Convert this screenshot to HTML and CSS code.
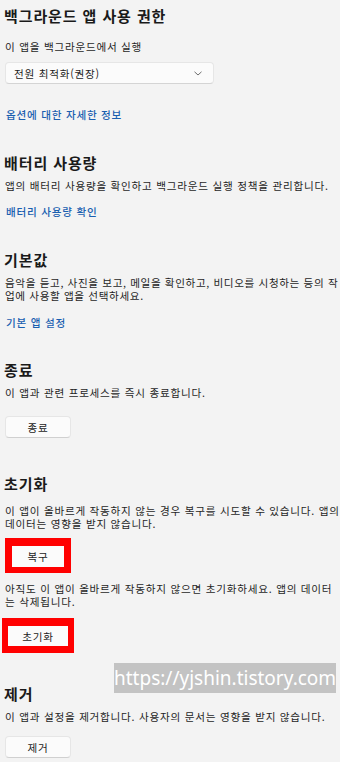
FILE: index.html
```html
<!DOCTYPE html>
<html lang="ko">
<head>
<meta charset="utf-8">
<title>앱 설정</title>
<link rel="stylesheet" href="styles.css">
</head>
<body>
<main class="page">
  <section class="group group-first">
    <h1 class="heading">백그라운드 앱 사용 권한</h1>
    <p class="label">이 앱을 백그라운드에서 실행</p>
    <div class="select">
      <span class="select-text">전원 최적화(권장)</span>
      <svg class="chevron" width="8" height="5" viewBox="0 0 8 5"><polyline points="0.5,0.8 4,4 7.5,0.8" fill="none" stroke="#5f5f5f" stroke-width="0.9"/></svg>
    </div>
    <a class="link link-first">옵션에 대한 자세한 정보</a>
  </section>

  <section class="group group-battery">
    <h2 class="heading">배터리 사용량</h2>
    <p class="desc">앱의 배터리 사용량을 확인하고 백그라운드 실행 정책을 관리합니다.</p>
    <a class="link">배터리 사용량 확인</a>
  </section>

  <section class="group group-default">
    <h2 class="heading">기본값</h2>
    <p class="desc desc-multi desc-default">음악을 듣고, 사진을 보고, 메일을 확인하고, 비디오를 시청하는 등의 작업에 사용할 앱을 선택하세요.</p>
    <a class="link link-default">기본 앱 설정</a>
  </section>

  <section class="group group-terminate">
    <h2 class="heading">종료</h2>
    <p class="desc">이 앱과 관련 프로세스를 즉시 종료합니다.</p>
    <button class="btn btn-action">종료</button>
  </section>

  <section class="group group-reset">
    <h2 class="heading">초기화</h2>
    <p class="desc desc-multi desc-reset1">이 앱이 올바르게 작동하지 않는 경우 복구를 시도할 수 있습니다. 앱의 데이터는 영향을 받지 않습니다.</p>
    <div class="mark mark-repair"><button class="btn btn-marked">복구</button></div>
    <p class="desc desc-multi desc-reset2">아직도 이 앱이 올바르게 작동하지 않으면 초기화하세요. 앱의 데이터는 삭제됩니다.</p>
    <div class="mark mark-reset"><button class="btn btn-marked">초기화</button></div>
  </section>

  <section class="group group-remove">
    <h2 class="heading">제거</h2>
    <p class="desc">이 앱과 설정을 제거합니다. 사용자의 문서는 영향을 받지 않습니다.</p>
    <button class="btn btn-action">제거</button>
  </section>

  <div class="watermark">https://yjshin.tistory.com</div>
</main>
</body>
</html>
```

FILE: styles.css
```css
html, body {
  margin: 0;
  padding: 0;
  background: #f3f3f3;
}

body {
  font-family: "Noto Sans CJK KR", "Noto Sans", sans-serif;
  color: #1b1b1b;
  width: 340px;
  height: 762px;
  overflow: hidden;
}

.page {
  position: relative;
  display: flex;
  flex-direction: column;
  padding: 0 0 0 5px;
}

.group {
  display: flex;
  flex-direction: column;
  align-items: flex-start;
}

.group-first { margin-top: 6px; }
.group-battery { margin-top: 31px; }
.group-default { margin-top: 31px; }
.group-terminate { margin-top: 30px; }
.group-reset { margin-top: 36px; }
.group-remove { margin-top: 31px; }

.heading {
  margin: 0 0 0 -1px;
  font-size: 15px;
  line-height: 20px;
  font-weight: 600;
  color: #1a1a1a;
  letter-spacing: 0.9px;
}

.label,
.desc {
  margin: 6px 0 0;
  font-size: 10.6px;
  line-height: 14px;
  color: #1f1f1f;
  letter-spacing: 0.75px;
}

.label { margin-top: 14px; }

.desc-multi { line-height: 13px; }
.desc-default { letter-spacing: 0.62px; }
.desc-reset1 { margin-top: 10px; }
.desc-reset2 { margin-top: 9px; max-width: 330px; }

.select {
  margin-top: 8px;
  box-sizing: border-box;
  width: 209px;
  height: 22px;
  background: #fbfbfb;
  border: 1px solid #e6e6e6;
  border-bottom-color: #d4d4d4;
  border-radius: 4px;
  display: flex;
  align-items: center;
  justify-content: space-between;
  padding: 0 11px 0 8px;
}

.select-text {
  font-size: 10.6px;
  color: #1b1b1b;
  letter-spacing: 0.75px;
}

.chevron { display: block; }

.link {
  margin-top: 12px;
  font-size: 10.6px;
  line-height: 14px;
  color: #1a5fb0;
  font-weight: 500;
  margin-left: 1px;
  letter-spacing: 0.75px;
}

.link-first { margin-top: 24px; }
.link-default { margin-top: 14px; }

.btn {
  font-family: inherit;
  font-size: 10.6px;
  letter-spacing: 0.75px;
  color: #1b1b1b;
  background: #fbfbfb;
  border: 1px solid #e6e6e6;
  border-bottom-color: #d0d0d0;
  border-radius: 4px;
  padding: 0;
  box-sizing: border-box;
  display: flex;
  align-items: center;
  justify-content: center;
}

.btn-action {
  margin-top: 16px;
  width: 66px;
  height: 22px;
}

.group-remove .btn-action { margin-top: 12px; }

.mark {
  border: 7px solid #ff0000;
  display: flex;
}

.mark-repair {
  margin-top: 8px;
  border-width: 8px 7px 6px 7px;
}

.mark-reset {
  margin-top: 10px;
  margin-left: -3px;
  border-width: 8px 6px 7px 6px;
}

.btn-marked {
  border: none;
  border-radius: 0;
  background: #fbfbfb;
}

.mark-repair .btn-marked { width: 52px; height: 21px; }
.mark-reset .btn-marked { width: 60px; height: 20px; }

.watermark {
  position: absolute;
  left: 114px;
  top: 663px;
  width: 222px;
  height: 30px;
  background: #c3c3c3;
  color: #ffffff;
  font-family: "Noto Sans", "Open Sans", sans-serif;
  font-size: 19px;
  font-weight: 400;
  line-height: 30px;
  text-align: center;
  white-space: nowrap;
  letter-spacing: 0;
}
```
